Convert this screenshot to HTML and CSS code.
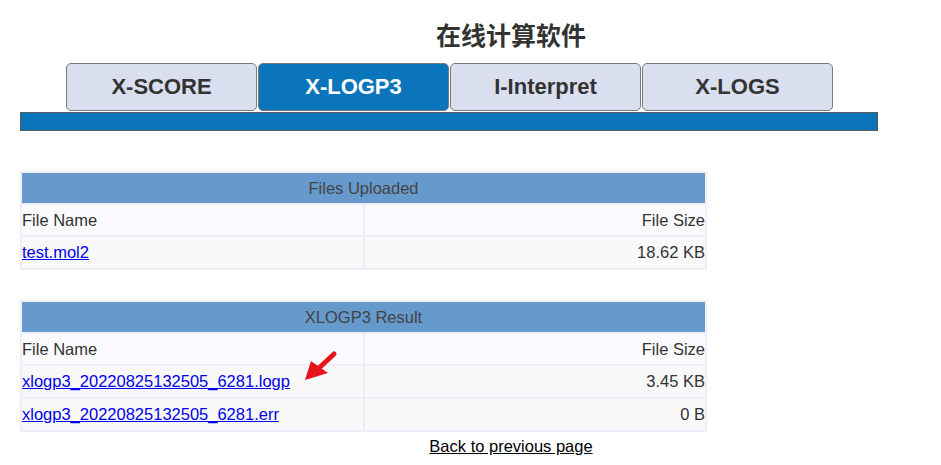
FILE: index.html
```html
<!DOCTYPE html>
<html lang="zh">
<head>
<meta charset="utf-8">
<title>在线计算软件</title>
<link rel="stylesheet" href="styles.css">
</head>
<body>
<div class="title">在线计算软件</div>
<div class="tabs">
  <div class="tab">X-SCORE</div>
  <div class="tab active">X-LOGP3</div>
  <div class="tab">I-Interpret</div>
  <div class="tab">X-LOGS</div>
</div>
<div class="bar"></div>

<table class="files first">
  <tr><th colspan="2">Files Uploaded</th></tr>
  <tr class="r1"><td class="name">File Name</td><td class="size">File Size</td></tr>
  <tr class="r2"><td class="name"><a href="#">test.mol2</a></td><td class="size">18.62 KB</td></tr>
</table>

<table class="files second">
  <tr><th colspan="2">XLOGP3 Result</th></tr>
  <tr class="r1"><td class="name">File Name</td><td class="size">File Size</td></tr>
  <tr class="r2"><td class="name"><a href="#">xlogp3_20220825132505_6281.logp</a></td><td class="size">3.45 KB</td></tr>
  <tr class="r2"><td class="name"><a href="#">xlogp3_20220825132505_6281.err</a></td><td class="size">0 B</td></tr>
</table>

<div class="back"><a href="#">Back to previous page</a></div>

<svg class="arrow" width="40" height="36" viewBox="0 0 40 36">
  <line x1="19" y1="20" x2="34" y2="6" stroke="#e8141c" stroke-width="5" stroke-linecap="round"/>
  <polygon points="5,32 11,13 28,25" fill="#e8141c"/>
</svg>
</body>
</html>
```

FILE: styles.css
```css
body {
  margin: 0;
  position: relative;
  font-family: "Liberation Sans", Arial, "Noto Sans CJK SC", sans-serif;
  font-size: 16.5px;
  color: #333;
  background: #fff;
}

.title {
  margin: 22px 0 0 100px;
  width: 822px;
  text-align: center;
  font-size: 25px;
  line-height: 28px;
  font-weight: bold;
  color: #333;
  font-family: "Liberation Sans", "Noto Sans CJK SC", sans-serif;
}

.tabs {
  display: flex;
  gap: 1px;
  margin: 13px 0 0 66px;
}

.tab {
  box-sizing: border-box;
  width: 191px;
  height: 48px;
  border: 1px solid #7a7a7a;
  border-radius: 5px;
  background: #dadff0;
  color: #333;
  font-size: 22px;
  font-weight: bold;
  display: flex;
  align-items: center;
  justify-content: center;
}

.tab.active {
  background: #0b75bb;
  color: #fff;
}

.bar {
  box-sizing: border-box;
  margin: 1px 0 0 20px;
  width: 858px;
  height: 19px;
  background: #0a74ba;
  border: 1px solid #5a5a5a;
}

.files {
  margin-left: 20px;
  width: 687px;
  border-collapse: separate;
  border-spacing: 2px;
  background: #eeeef9;
  font-size: 16.5px;
}

.files.first { margin-top: 40px; }
.files.second { margin-top: 30px; }

.files th {
  height: 30px;
  padding: 0;
  background: #6699cc;
  color: #444;
  font-weight: normal;
  text-align: center;
}

.files td {
  height: 30px;
  padding: 0;
}

.files tr.r2 td { height: 31px; }

.files td.name {
  width: 341px;
  text-align: left;
}

.files td.size {
  text-align: right;
}

.files tr.r1 td { background: #fbfbff; }
.files tr.r2 td { background: #f9f9f9; }

.files a { color: #0000ee; }

.back {
  margin: 5px 0 0 100px;
  width: 822px;
  text-align: center;
  line-height: 19px;
}

.back a { color: #000; }

.arrow {
  position: absolute;
  left: 300px;
  top: 348px;
}
```
